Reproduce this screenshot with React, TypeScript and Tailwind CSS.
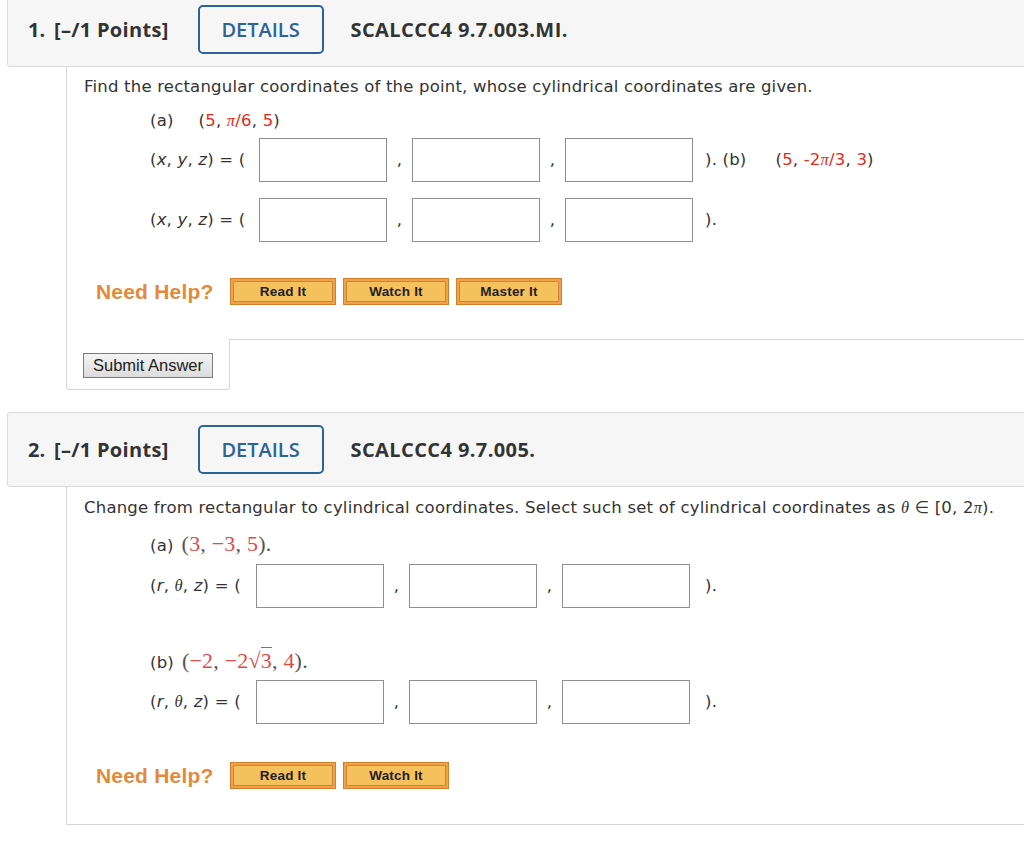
import React from 'react';

const box = "w-[128px] h-[44px] border border-[#8f8f8f] bg-white shrink-0";
const red = "text-[#e8291c]";
const mred = "text-[#e04a4a]";

const Box = () => <div className={box} />;
const Comma = () => <span className="w-[25px] text-center">,</span>;

const Header = ({ num, code, top }: { num: string; code: string; top?: boolean }) => (
  <div className={`flex items-center h-[75px] pl-[20px] bg-[#f6f6f6] border border-[#dadada] rounded-[3px] ${top ? '-mt-[8px]' : ''}`} style={{ fontFamily: '"Open Sans", sans-serif' }}>
    <span className="text-[20px] font-bold text-[#333] w-[26px]">{num}</span>
    <span className="text-[20px] font-bold text-[#333] tracking-[0.3px]">[–/1 Points]</span>
    <div className="ml-[29px] w-[126px] h-[49px] border-2 border-[#2e6398] rounded-[5px] flex items-center justify-center text-[20px] font-semibold text-[#2e6398]">
      DETAILS
    </div>
    <span className="ml-[27px] text-[20px] font-bold text-[#333] tracking-[0.4px]">{code}</span>
  </div>
);

const HelpButton = ({ label }: { label: string }) => (
  <div className="w-[106px] h-[27px] border border-[#d27f2c] bg-[#efa24a] p-[2px]">
    <div className="h-full border border-[#c98634] bg-[#f5c15d] flex items-center justify-center text-[13.5px] font-bold text-[#1f1f1f]" style={{ fontFamily: '"Liberation Sans", Arial, sans-serif' }}>
      {label}
    </div>
  </div>
);

const NeedHelp = ({ buttons }: { buttons: string[] }) => (
  <div className="flex items-center ml-[12px] h-[27px]">
    <span className="text-[21px] font-bold text-[#e5893a] w-[134px]" style={{ fontFamily: '"Liberation Sans", Arial, sans-serif' }}>Need Help?</span>
    <div className="flex gap-[7px]">
      {buttons.map(b => <HelpButton key={b} label={b} />)}
    </div>
  </div>
);

const Serif = ({ children }: { children: React.ReactNode }) => (
  <span className="text-[22px] text-[#555]" style={{ fontFamily: '"Liberation Serif", "DejaVu Serif", serif' }}>{children}</span>
);

export default function App() {
  return (
    <div className="w-[1024px] h-[853px] overflow-hidden bg-white text-[#333]" style={{ fontFamily: '"DejaVu Sans", Verdana, sans-serif' }}>
      {/* Question 1 */}
      <div className="ml-[7px] w-[1040px]">
        <Header num="1." code="SCALCCC4 9.7.003.MI." top />
        <div className="ml-[59px] border-l border-[#d6d6d6] pl-[17px] pt-[10px] pb-[34px] text-[16.5px] leading-[20px] tracking-[0.2px]">
          <p>Find the rectangular coordinates of the point, whose cylindrical coordinates are given.</p>
          <div className="ml-[66px] mt-[14px]">
            <div className="flex">
              <span>(a)</span>
              <span className="ml-[25px]">(<span className={red}>5</span>, <span className={red}><i className="font-serif">π</i>/6</span>, <span className={red}>5</span>)</span>
            </div>
            <div className="flex items-center mt-[7px]">
              <span className="w-[109px] whitespace-nowrap">(<i>x</i>, <i>y</i>, <i>z</i>) = (</span>
              <Box /><Comma /><Box /><Comma /><Box />
              <span className="ml-[12px]">). (b)</span>
              <span className="ml-[29px]">(<span className={red}>5</span>, <span className={red}>-2<i className="font-serif">π</i>/3</span>, <span className={red}>3</span>)</span>
            </div>
            <div className="flex items-center mt-[16px]">
              <span className="w-[109px] whitespace-nowrap">(<i>x</i>, <i>y</i>, <i>z</i>) = (</span>
              <Box /><Comma /><Box /><Comma /><Box />
              <span className="ml-[12px]">).</span>
            </div>
          </div>
          <div className="mt-[36px]">
            <NeedHelp buttons={["Read It", "Watch It", "Master It"]} />
          </div>
        </div>
        <div className="flex ml-[59px]">
          <div className="w-[164px] h-[51px] border-l border-r border-b border-[#d6d6d6] rounded-b-[4px] pl-[16px] pt-[14px]">
            <div className="w-[130px] h-[25px] border border-[#7a7a7a] bg-gradient-to-b from-[#f4f4f4] to-[#dcdcdc] flex items-center justify-center text-[16.5px] text-[#222]" style={{ fontFamily: '"Liberation Sans", Arial, sans-serif' }}>
              Submit Answer
            </div>
          </div>
          <div className="flex-1 border-t border-[#d6d6d6]" />
        </div>
      </div>

      {/* Question 2 */}
      <div className="ml-[7px] w-[1040px] mt-[22px]">
        <Header num="2." code="SCALCCC4 9.7.005." />
        <div className="ml-[59px] border-l border-b border-[#d6d6d6] pl-[17px] pt-[11px] pb-[35px] text-[16.5px] leading-[20px] tracking-[0.2px]">
          <p className="whitespace-nowrap">Change from rectangular to cylindrical coordinates. Select such set of cylindrical coordinates as <i className="font-serif">θ</i> ∈ [0, 2<i className="font-serif">π</i>).</p>
          <div className="ml-[66px] mt-[14px]">
            <div className="flex items-baseline h-[24px] leading-[24px]">
              <span>(a)</span>
              <span className="ml-[8px]"><Serif>(<span className={mred}>3</span>, <span className={mred}>−3</span>, <span className={mred}>5</span>).</Serif></span>
            </div>
            <div className="flex items-center mt-[8px]">
              <span className="w-[106px] whitespace-nowrap">(<i>r</i>, <i className="font-serif">θ</i>, <i>z</i>) = (</span>
              <Box /><Comma /><Box /><Comma /><Box />
              <span className="ml-[15px]">).</span>
            </div>
            <div className="flex items-baseline h-[24px] leading-[24px] mt-[41px]">
              <span>(b)</span>
              <span className="ml-[8px]"><Serif>(<span className={mred}>−2</span>, <span className={mred}>−2√<span className="border-t border-[#e04a4a]">3</span></span>, <span className={mred}>4</span>).</Serif></span>
            </div>
            <div className="flex items-center mt-[7px]">
              <span className="w-[106px] whitespace-nowrap">(<i>r</i>, <i className="font-serif">θ</i>, <i>z</i>) = (</span>
              <Box /><Comma /><Box /><Comma /><Box />
              <span className="ml-[15px]">).</span>
            </div>
          </div>
          <div className="mt-[38px]">
            <NeedHelp buttons={["Read It", "Watch It"]} />
          </div>
        </div>
      </div>
    </div>
  );
}
